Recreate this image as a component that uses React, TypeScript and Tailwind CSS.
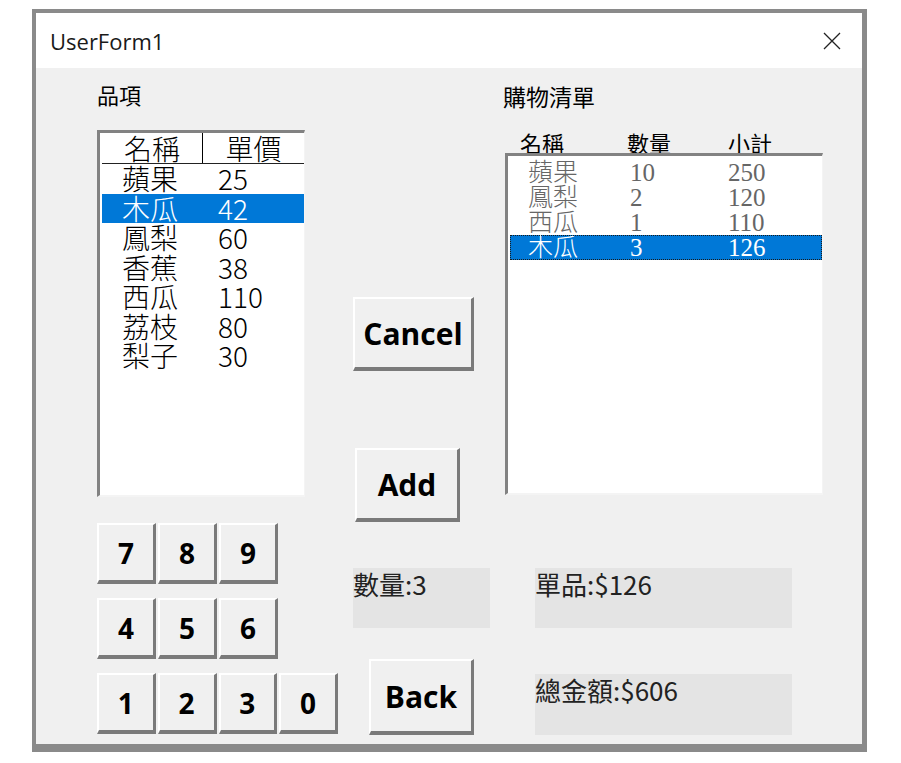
import React from "react";

const cjk = { fontFamily: '"Noto Sans CJK TC", "Noto Sans", sans-serif' };
const ui = { fontFamily: '"Open Sans", "Noto Sans CJK TC", sans-serif' };
const serif = { fontFamily: '"Liberation Serif", "Noto Sans CJK TC", serif' };

function Btn({ label, className }: { label: string; className: string }) {
  return (
    <div
      style={ui}
      className={
        "flex items-center justify-center bg-[#f0f0f0] border-solid border-t-2 border-l-2 border-t-white border-l-white border-r-[3px] border-b-[4px] border-r-[#7a7a7a] border-b-[#7a7a7a] font-bold text-black " +
        className
      }
    >
      {label}
    </div>
  );
}

export default function App() {
  const leftItems = [
    ["蘋果", "25"],
    ["木瓜", "42"],
    ["鳳梨", "60"],
    ["香蕉", "38"],
    ["西瓜", "110"],
    ["荔枝", "80"],
    ["梨子", "30"],
  ];
  const rightItems = [
    ["蘋果", "10", "250"],
    ["鳳梨", "2", "120"],
    ["西瓜", "1", "110"],
    ["木瓜", "3", "126"],
  ];
  const keyRows = [
    ["7", "8", "9"],
    ["4", "5", "6"],
    ["1", "2", "3", "0"],
  ];
  return (
    <div className="w-[901px] min-h-[763px] bg-white pt-[9px] pl-[32px]">
      <div className="w-[835px] h-[743px] flex flex-col border-solid border-[#8a8a8a] border-l-[4px] border-t-[4px] border-r-[5px] border-b-[8px]">
        {/* title bar */}
        <div className="h-[55px] shrink-0 bg-white flex items-center justify-between pl-[14px] pr-[21px]">
          <span style={ui} className="text-[22px] leading-none text-[#1a1a1a]">
            UserForm1
          </span>
          <svg width="18" height="18" viewBox="0 0 18 18" className="mt-[1px]">
            <path d="M1 1 L17 17 M17 1 L1 17" stroke="#222" strokeWidth="1.3" fill="none" />
          </svg>
        </div>

        {/* body */}
        <div className="flex-1 bg-[#f0f0f0] flex pl-[61px]">
          {/* left column */}
          <div className="w-[241px] flex flex-col">
            <div style={cjk} className="mt-[15px] h-[22px] text-[22px] leading-[22px] text-black">
              品項
            </div>
            <div
              style={cjk}
              className="mt-[25px] w-[208px] h-[367px] bg-white border-solid border-l-[3px] border-t-[3px] border-l-[#828282] border-t-[#828282] border-r border-b-2 border-r-[#f4f4f4] border-b-[#f4f4f4] pl-[2px] font-light text-[28px] text-black"
            >
              <div className="flex h-[30px] leading-[30px]">
                <div className="w-[101px] text-center border-r border-solid border-r-black">名稱</div>
                <div className="flex-1 text-center">單價</div>
              </div>
              <div className="h-px bg-[#222]" />
              {leftItems.map(([n, p]) => {
                const sel = n === "木瓜";
                return (
                  <div
                    key={n}
                    className={
                      "flex h-[29.5px] leading-[29.5px] " +
                      (sel ? "bg-[#0078d7] text-white" : "")
                    }
                  >
                    <div className="w-[116px] pl-[20px]">{n}</div>
                    <div>{p}</div>
                  </div>
                );
              })}
            </div>
            <div className="mt-[26px] flex flex-col gap-[14px]">
              {keyRows.map((row, i) => (
                <div key={i} className="flex gap-[2px]">
                  {row.map((k) => (
                    <Btn key={k} label={k} className="w-[59px] h-[61px] text-[28px]" />
                  ))}
                </div>
              ))}
            </div>
          </div>

          {/* middle column */}
          <div className="ml-[15px] w-[137px] flex flex-col">
            <Btn label="Cancel" className="mt-[229px] w-[121px] h-[74px] text-[30px]" />
            <Btn label="Add" className="mt-[77px] ml-[2px] w-[105px] h-[74px] text-[30px]" />
            <div
              style={cjk}
              className="mt-[46px] w-[137px] h-[60px] bg-[#e4e4e4] text-[26px] leading-[32px] text-[#222]"
            >
              數量:3
            </div>
            <Btn label="Back" className="mt-[31px] ml-[16px] w-[105px] h-[76px] text-[30px]" />
          </div>

          {/* right column */}
          <div className="ml-[13px] w-[322px] flex flex-col">
            <div style={cjk} className="mt-[17px] h-[23px] text-[23px] leading-[23px] text-black">
              購物清單
            </div>
            <div style={cjk} className="mt-[23px] h-[22px] flex text-[22px] leading-[22px] text-black pl-[17px]">
              <span className="w-[107px]">名稱</span>
              <span className="w-[101px]">數量</span>
              <span>小計</span>
            </div>
            <div
              style={serif}
              className="ml-[2px] w-[318px] h-[342px] bg-white border-solid border-l-[3px] border-t-[3px] border-l-[#828282] border-t-[#828282] border-r border-b-2 border-r-[#f4f4f4] border-b-[#f4f4f4] pl-[2px] pt-[4px] text-[25px]"
            >
              {rightItems.map(([n, q, s]) => {
                const sel = n === "木瓜";
                return (
                  <div
                    key={n}
                    className={
                      "flex h-[25px] leading-[25px] " +
                      (sel
                        ? "bg-[#0078d7] text-white outline-1 outline-dotted outline-[#1a1a1a] -outline-offset-1"
                        : "text-[#666]")
                    }
                  >
                    <div className="w-[120px] pl-[18px] font-light">{n}</div>
                    <div className="w-[98px]">{q}</div>
                    <div>{s}</div>
                  </div>
                );
              })}
            </div>
            <div
              style={cjk}
              className="mt-[73px] ml-[32px] w-[257px] h-[60px] bg-[#e4e4e4] text-[26px] leading-[32px] text-[#222]"
            >
              單品:$126
            </div>
            <div
              style={cjk}
              className="mt-[46px] ml-[32px] w-[257px] h-[61px] bg-[#e4e4e4] text-[26px] leading-[32px] text-[#222]"
            >
              總金額:$606
            </div>
          </div>
        </div>
      </div>
    </div>
  );
}
